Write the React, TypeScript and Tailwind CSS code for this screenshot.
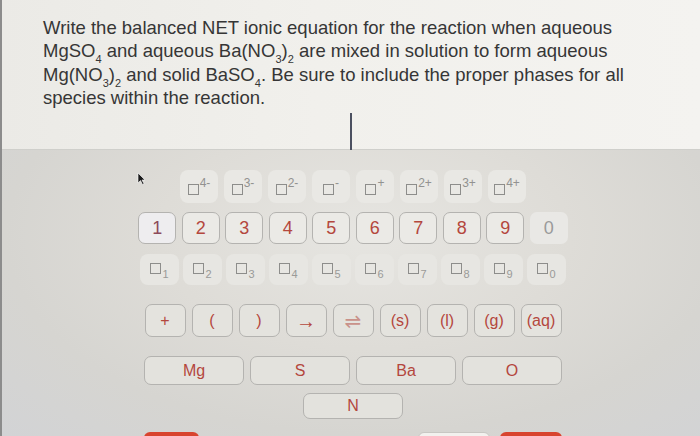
import React from 'react';

const charges = ['4-', '3-', '2-', '-', '+', '2+', '3+', '4+'];
const digits = ['1', '2', '3', '4', '5', '6', '7', '8', '9', '0'];
const subs = ['1', '2', '3', '4', '5', '6', '7', '8', '9', '0'];
const ops = ['+', '(', ')', '→', '⇌', '(s)', '(l)', '(g)', '(aq)'];
const elements = ['Mg', 'S', 'Ba', 'O'];

const Box = () => <span className="inline-block w-[11px] h-[11px] border border-[#8d8d8b] bg-transparent" />;

const ChargeKey = ({ label }: { label: string }) => (
  <div className="w-[38px] h-[33px] rounded-lg bg-[#e9e8e4] flex items-center justify-center text-[#929290]">
    <span className="mt-[6px]"><Box /></span>
    <span className="text-[12px] leading-none mb-[7px] ml-[1px]">{label}</span>
  </div>
);

const SubKey = ({ label }: { label: string }) => (
  <div className="w-[39px] h-[31px] rounded-lg bg-[#e7e6e2] flex items-center justify-center text-[#9a9a98]">
    <span className="-mt-[2px]"><Box /></span>
    <span className="text-[11px] leading-none mt-[10px] ml-[1px]">{label}</span>
  </div>
);

const Sub = ({ children }: { children: React.ReactNode }) => (
  <sub className="text-[11px] bottom-[-6px]">{children}</sub>
);

export default function App() {
  return (
    <div
      className="relative w-[700px] h-[436px] overflow-hidden border-l-2 border-[#8c8c8c]"
      style={{ fontFamily: '"Liberation Sans", Arial, "DejaVu Sans", sans-serif' }}
    >
      {/* question panel */}
      <div className="h-[150px] bg-[linear-gradient(90deg,#ebeae6_0%,#f1f0ec_45%,#f4f3f0_100%)] border-b border-[#cfcfcb] pl-[41px] pt-[16px]">
        <p className="text-[18.5px] leading-[23.3px] text-[#363636] whitespace-nowrap">
          Write the balanced NET ionic equation for the reaction when aqueous
          <br />
          MgSO<Sub>4</Sub> and aqueous Ba(NO<Sub>3</Sub>)<Sub>2</Sub> are mixed in solution to form aqueous
          <br />
          Mg(NO<Sub>3</Sub>)<Sub>2</Sub> and solid BaSO<Sub>4</Sub>. Be sure to include the proper phases for all
          <br />
          species within the reaction.
        </p>
        <div className="ml-[307px] mt-[4px] w-[2px] h-[38px] bg-[#4b5060]" />
      </div>

      {/* keypad */}
      <div className="relative h-[286px] bg-[radial-gradient(ellipse_at_52%_30%,#e6e5e1_0%,#dedcd7_40%,#d6d5d1_70%,#d2d3d5_100%)] pt-[20px] pl-[4px] flex flex-col items-center">
        <svg className="absolute left-[135px] top-[22px]" width="9" height="13" viewBox="0 0 9 13">
          <path d="M1 1 L1 11 L3.5 8.5 L5.5 12.5 L7 11.8 L5 8 L8 8 Z" fill="#1a1a1a" stroke="#ffffff" strokeWidth="0.6" />
        </svg>

        <div className="flex gap-[6px]">
          {charges.map((c) => (
            <ChargeKey key={c} label={c} />
          ))}
        </div>

        <div className="flex gap-[5.5px] mt-[9px]">
          {digits.map((d, i) => (
            <div
              key={d}
              className={
                i === 0
                  ? 'w-[38px] h-[32px] rounded-[7px] border border-[#b4b3b0] bg-[#eeedef] flex items-center justify-center text-[18px] text-[#8c4a5a]'
                  : i === 9
                  ? 'w-[38px] h-[32px] rounded-[7px] bg-[#e9e8e5] flex items-center justify-center text-[18px] text-[#9a9a9a]'
                  : 'w-[38px] h-[32px] rounded-[7px] border border-[#b4b3b0] bg-[#ebeae6] flex items-center justify-center text-[18px] text-[#b4473d]'
              }
            >
              {d}
            </div>
          ))}
        </div>

        <div className="flex gap-[4px] mt-[10px]">
          {subs.map((s) => (
            <SubKey key={s} label={s} />
          ))}
        </div>

        <div className="flex gap-[6px] mt-[19px]">
          {ops.map((o) => (
            <div
              key={o}
              className={
                'w-[41px] h-[33px] rounded-[7px] border border-[#b4b3b0] bg-[#e4e3de] flex items-center justify-center ' +
                (o === '⇌'
                  ? 'text-[20px] text-[#c9928a]'
                  : o === '→'
                  ? 'text-[20px] text-[#b4473d]'
                  : 'text-[16px] text-[#b4473d]')
              }
            >
              {o}
            </div>
          ))}
        </div>

        <div className="flex gap-[6px] mt-[19px]">
          {elements.map((e) => (
            <div
              key={e}
              className="w-[100px] h-[29px] rounded-[7px] border border-[#b4b3b0] bg-[#e3e2dd] flex items-center justify-center text-[16px] text-[#b4473d]"
            >
              {e}
            </div>
          ))}
        </div>

        <div className="mt-[8px] w-[100px] h-[29px] rounded-[7px] border border-[#b4b3b0] bg-[#e3e2dd] flex items-center justify-center text-[16px] text-[#b4473d]">
          N
        </div>

        <div className="mt-[13px] w-[418px] flex justify-between">
          <div className="w-[55px] h-[30px] rounded-md bg-[#d8442f]" />
          <div className="flex gap-[10px]">
            <div className="w-[72px] h-[30px] rounded-md bg-[#f2f1ee] border border-[#c8c7c3]" />
            <div className="w-[62px] h-[30px] rounded-md bg-[#d8442f]" />
          </div>
        </div>
      </div>
    </div>
  );
}
